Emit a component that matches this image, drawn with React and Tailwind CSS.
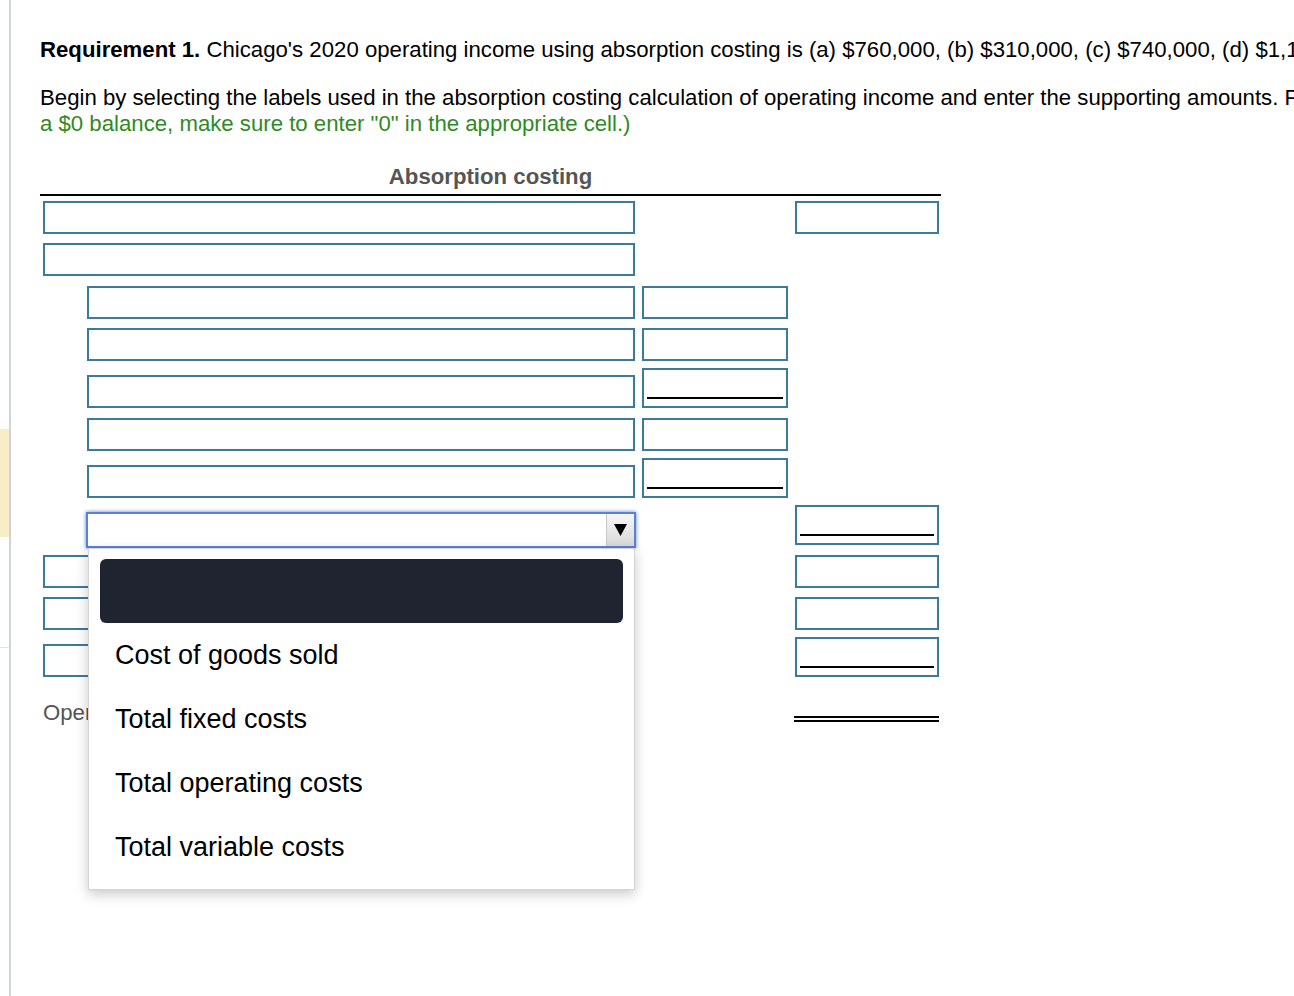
import React from 'react';

const font = { fontFamily: '"Liberation Sans", Arial, Helvetica, sans-serif' };

// plain answer box; "under" adds the total rule inside
const Box = ({ w = 'w-[146px]', h = 'h-[33px]', under = false, extra = '' }) => (
  <div className={`${w} ${h} ${extra} border-2 border-[#3b7a9a] bg-white flex flex-col justify-end px-[3px] pb-[7px]`}>
    {under && <div className="h-[2px] bg-black" />}
  </div>
);

const Label = ({ indent = false }) => (
  <Box w={indent ? 'w-[548px]' : 'w-[592px]'} extra={indent ? 'ml-[47px]' : 'ml-[3px]'} />
);

const options = ['', 'Cost of goods sold', 'Total fixed costs', 'Total operating costs', 'Total variable costs'];

const Dropdown = () => (
  <div className="relative ml-[46px] w-[550px] mb-[-2px]">
    <div className="h-[36px] border-2 border-[#5a80d8] shadow-[0_0_4px_#5a80d8] bg-white flex justify-end">
      <div className="w-[28px] h-full bg-gradient-to-b from-[#f6f6f6] to-[#d9d9d9] border-l border-[#c8c8c8] flex items-center justify-center">
        <svg width="13" height="12" viewBox="0 0 13 12">
          <polygon points="0,0 13,0 6.5,12" fill="#000" />
        </svg>
      </div>
    </div>
    <div className="absolute z-10 left-[2px] top-[36px] w-[547px] bg-white border border-[#d4d4d4] shadow-[0_4px_12px_rgba(0,0,0,0.22)] py-[10px] px-[11px]">
      {options.map((o, i) => (
        <div
          key={i}
          className={`h-[64px] flex items-center pl-[15px] text-[27px] text-black ${i === 0 ? 'bg-[#1f2430] rounded-md' : ''}`}
        >
          {o}
        </div>
      ))}
    </div>
  </div>
);

const rows = [
  { h: 'h-[42px]', c1: <Label />, c3: <Box w="w-[144px]" /> },
  { h: 'h-[42px]', c1: <Label /> },
  { h: 'h-[43px]', c1: <Label indent />, c2: <Box /> },
  { h: 'h-[42px]', c1: <Label indent />, c2: <Box /> },
  { h: 'h-[47px]', c1: <Label indent />, c2: <Box h="h-[40px]" under /> },
  { h: 'h-[43px]', c1: <Label indent />, c2: <Box /> },
  { h: 'h-[47px]', c1: <Label indent />, c2: <Box h="h-[40px]" under /> },
  { h: 'h-[48px]', c1: <Dropdown />, c3: <Box w="w-[144px]" h="h-[40px]" under extra="mb-[1px]" /> },
  { h: 'h-[42px]', c1: <Label />, c3: <Box w="w-[144px]" /> },
  { h: 'h-[42px]', c1: <Label />, c3: <Box w="w-[144px]" /> },
  { h: 'h-[47px]', c1: <Label />, c3: <Box w="w-[144px]" h="h-[40px]" under /> },
];

export default function App() {
  return (
    <div className="relative w-full h-[996px] overflow-hidden bg-white flex" style={font}>
      {/* left rail */}
      <div className="relative w-[11px] shrink-0 border-r-2 border-[#cfd3de]">
        <div className="absolute left-0 top-[429px] w-[9px] h-[108px] bg-[#f8edc6]" />
        <div className="absolute left-0 top-[647px] w-[9px] h-px bg-[#e4e4e4]" />
      </div>

      <div className="pl-[29px] pt-[37px] text-[22.2px] leading-[26px] text-black">
        <p className="whitespace-nowrap">
          <span className="font-bold">Requirement 1.</span> Chicago's 2020 operating income using absorption costing is (a) $760,000, (b) $310,000, (c) $740,000, (d) $1,100,000.
        </p>
        <p className="mt-[22px] whitespace-nowrap">
          Begin by selecting the labels used in the absorption costing calculation of operating income and enter the supporting amounts. Please complete all input fields. <span className="text-[#2f8a24]">(If an item has</span>
          <br />
          <span className="text-[#2f8a24]">a $0 balance, make sure to enter "0" in the appropriate cell.)</span>
        </p>

        <div className="w-[901px] mt-[27px]">
          <div className="text-center font-bold text-[#555] pb-[4px] border-b-2 border-black">Absorption costing</div>

          {rows.map((r, i) => (
            <div key={i} className={`grid grid-cols-[598px_153px_150px] ${r.h}`}>
              <div className="flex items-end pb-[4px]">{r.c1}</div>
              <div className="flex items-end pb-[4px] pl-[4px]">{r.c2}</div>
              <div className="flex items-end pb-[4px] pl-[4px]">{r.c3}</div>
            </div>
          ))}

          <div className="grid grid-cols-[598px_153px_150px] h-[46px]">
            <div className="pt-[19px] pl-[3px] text-[#555]">Operating income</div>
            <div />
            <div className="pt-[35px] pl-[3px]">
              <div className="w-[145px] h-[2px] bg-black" />
              <div className="w-[145px] h-[2px] bg-black mt-[2px]" />
            </div>
          </div>
        </div>
      </div>
    </div>
  );
}
